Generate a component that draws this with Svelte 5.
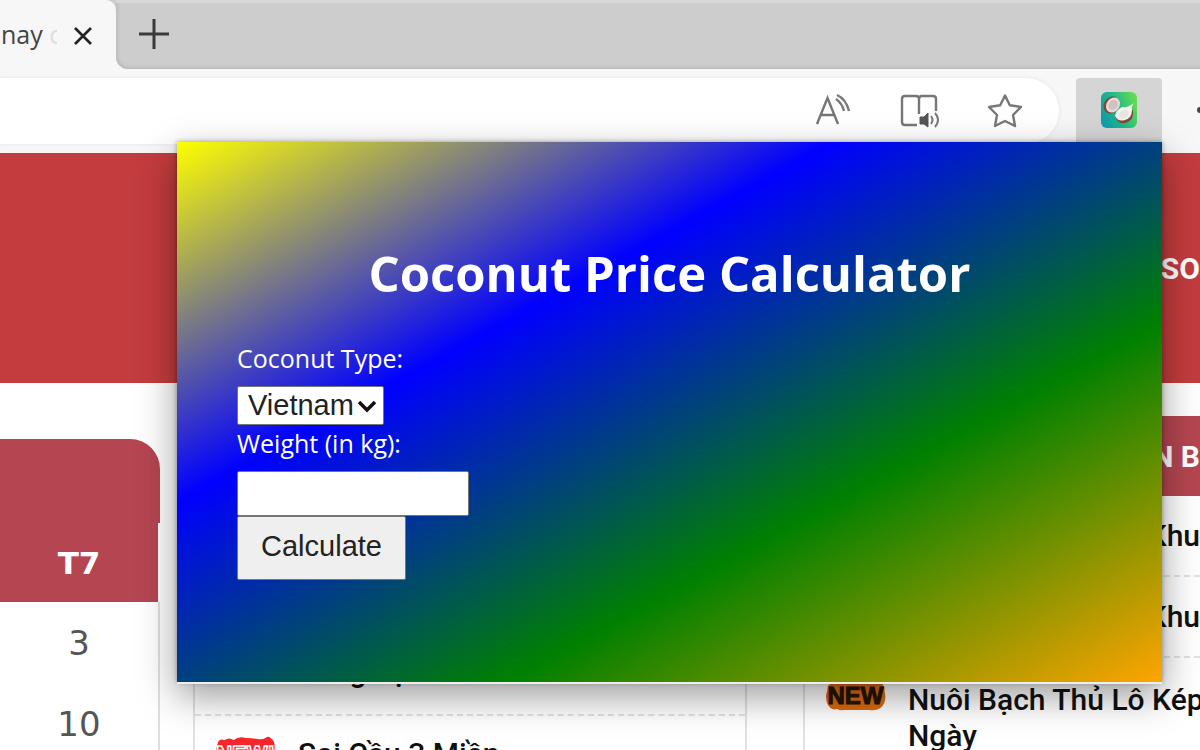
<script>
  let coconutType = $state('Vietnam');
  let weight = $state('');
</script>

{#snippet orangeBadge()}
  <svg class="badge" width="61" height="30" viewBox="0 0 60 30" aria-hidden="true">
    <path
      d="M8 1 H52 Q60 1 59 9 Q62 20 55 26 Q50 29 44 28 L18 28 Q14 29 12 27 Q5 29 2 22 Q-1 15 2 8 Q1 2 8 1Z"
      fill="#dc6910"
    />
    <text x="30" y="22" text-anchor="middle" font-size="24" fill="#271405" stroke="#271405">NEW</text>
  </svg>
{/snippet}

{#snippet redBadge()}
  <svg class="badge" width="61" height="42" viewBox="0 0 60 42" aria-hidden="true">
    <path
      d="M2 8 Q3 2 9 4 Q14 1 18 4 Q24 0 30 2 Q37 2 42 3 Q47 4 50 2 Q53 -1 56 3 Q60 5 59 14 L57 32 Q54 40 48 38 L12 38 Q4 39 2 30 Q-1 18 2 8Z"
      fill="#f8252b"
    />
    <text x="30" y="25" text-anchor="middle" font-size="22" fill="#f8252b" stroke="#fff" stroke-width="1.5">NEW!</text>
  </svg>
{/snippet}

<div class="window">
  <header class="tabs">
    <div class="tab">
      <span class="tab-title">nay <i>c</i></span>
      <button class="bare" aria-label="Close tab">
        <svg width="20" height="20" viewBox="0 0 20 20"><path d="M2 2 18 18M18 2 2 18" stroke="#222" stroke-width="2.6" /></svg>
      </button>
    </div>
    <div class="strip">
      <button class="bare" aria-label="New tab">
        <svg width="32" height="32" viewBox="0 0 32 32"><path d="M1 16H31M16 1V31" stroke="#3a3a3a" stroke-width="3" /></svg>
      </button>
    </div>
  </header>

  <div class="toolbar">
    <div class="address">
      <button class="bare" aria-label="Read aloud">
        <svg width="36" height="36" viewBox="0 0 36 36" fill="none" stroke="#777" stroke-width="2.400">
          <path d="M2 31 12.500 5 23 31M6 22H19" />
          <path d="M21 6Q27 10 29 18M22 2Q31 6 34 18" />
        </svg>
      </button>
      <button class="bare" aria-label="Immersive reader">
        <svg width="40" height="36" viewBox="0 0 40 36" fill="none" stroke="#777" stroke-width="2.400">
          <path d="M18 32H6Q3 32 3 29V6Q3 3 6 3H17Q20 3 20 6V21M20 6Q20 3 23 3H34Q37 3 37 6V18" />
          <path d="M21 24H25L29 20V34L25 31H21Z" fill="#555" stroke="#555" stroke-width="1" />
          <path d="M32 23Q35 27 32 31M36 20Q42 27 36 34" stroke-width="2" />
        </svg>
      </button>
      <button class="bare" aria-label="Add to favorites">
        <svg width="36" height="36" viewBox="0 0 36 36" fill="none" stroke="#777" stroke-width="2.400" stroke-linejoin="round">
          <path d="M18 2.500 22.800 12.300 34 14 26 22 28 33 18 28 8 33 10 22 2 14 13.200 12.300Z" />
        </svg>
      </button>
    </div>

    <div class="extension">
      <button class="bare ext-button" aria-label="Coconut Price Calculator">
        <svg width="36" height="36" viewBox="0 0 36 36">
          <defs>
            <linearGradient id="tile" x1="0" y1=".7" x2="1" y2=".3">
              <stop offset="0" stop-color="#109da9" />
              <stop offset=".5" stop-color="#23b98a" />
              <stop offset="1" stop-color="#62dc51" />
            </linearGradient>
          </defs>
          <rect width="36" height="36" rx="6" fill="url(#tile)" />
          <ellipse cx="10.500" cy="13" rx="7.500" ry="9" transform="rotate(35 10.500 13)" fill="#804936" />
          <ellipse cx="12" cy="13" rx="6.500" ry="8" transform="rotate(35 12 13)" fill="#e6dcda" />
          <ellipse cx="12" cy="13" rx="4.500" ry="5.500" transform="rotate(35 12 13)" fill="#cfc3c2" />
          <path d="M14 25Q18 34 27 30Q33 27 32 18Z" fill="#804936" />
          <path d="M14 24Q15 18 21 15Q27 16 33 11Q30 15 31 18Q31 26 24 28Q17 30 14 24Z" fill="#f3f2ef" />
          <ellipse cx="23" cy="22" rx="5" ry="4" transform="rotate(-35 23 22)" fill="#e6e6e3" />
        </svg>
      </button>

      <section class="popup">
        <h1>Coconut Price Calculator</h1>
        <form onsubmit={(e) => e.preventDefault()}>
          <label for="type">Coconut Type:</label>
          <div class="select-wrap">
            <select id="type" bind:value={coconutType}>
              <option>Vietnam</option>
            </select>
            <svg width="20" height="14" viewBox="0 0 20 14"><path d="M2 3 10 11 18 3" fill="none" stroke="#111" stroke-width="3.500" /></svg>
          </div>
          <label for="weight">Weight (in kg):</label>
          <input id="weight" type="text" bind:value={weight} />
          <button class="calculate">Calculate</button>
        </form>
      </section>
    </div>
    <button class="bare more" aria-label="More">
      <svg width="3" height="6" viewBox="0 0 3 6"><circle cx="3" cy="3" r="3" fill="#444" /></svg>
    </button>
  </div>

  <main>
    <nav><a href="#top">SO</a></nav>
    <div class="columns">
      <table>
        <thead>
          <tr class="month"><td></td></tr>
          <tr><th>T7</th></tr>
        </thead>
        <tbody>
          <tr><td>3</td></tr>
          <tr><td>10</td></tr>
        </tbody>
      </table>

      <ul class="list middle">
        <li class="first"><span class="spacer"></span><a href="#a">Vàng Lộc</a></li>
        <li class="second">{@render redBadge()}<a href="#b">Soi Cầu 3 Miền</a></li>
      </ul>

      <section class="right">
        <h2>N B</h2>
        <ul class="list">
          <li class="tail"><a href="#c">Khu</a></li>
          <li class="tail"><a href="#d">Khu</a></li>
          <li class="wrapped">{@render orangeBadge()}<a href="#e">Nuôi Bạch Thủ Lô Kép<br />Ngày</a></li>
        </ul>
      </section>
    </div>
  </main>
</div>

<style>
  :global(body) { margin: 0; background: #fff; }
  * { box-sizing: border-box; }
  .window {
    height: 100vh;
    display: flex;
    flex-direction: column;
    overflow: hidden;
    font-family: Roboto, "Liberation Sans", sans-serif;
  }
  svg { display: block; flex: none; }
  a { color: inherit; text-decoration: none; }
  .bare { border: 0; padding: 0; background: none; display: flex; align-items: center; justify-content: center; }

  .tabs { display: flex; height: 69px; flex: none; background: linear-gradient(#cdcdcd 50%, #f7f7f7 50%); }
  .tab {
    display: flex;
    align-items: center;
    justify-content: space-between;
    width: 116px;
    padding: 2px 23px 0 1px;
    background: #f7f7f7;
    border-top-right-radius: 10px;
  }
  .tab-title { font: 25px/32px "Open Sans", sans-serif; color: #444; white-space: nowrap; width: 56px; padding-bottom: 4px; overflow: hidden; }
  .tab-title i { font-style: normal; color: #ddd; }
  .strip {
    flex: 1;
    display: flex;
    align-items: center;
    padding: 0 0 4px 22px;
    background: #cdcdcd;
    border-top: 3px solid #d8d8d8;
    border-bottom-left-radius: 12px;
    box-shadow: inset 2px -2px 3px #bdbdbd;
  }

  .toolbar {
    position: relative;
    z-index: 1;
    flex: none;
    display: flex;
    height: 84px;
    padding-top: 9px;
    background: #f7f7f7;
  }
  .address {
    flex: 1;
    display: flex;
    align-items: center;
    justify-content: flex-end;
    gap: 48px;
    height: 66px;
    padding-right: 36px;
    background: #fff;
    border-radius: 0 33px 33px 0;
    box-shadow: 0 0 4px #e4e4e4;
  }
  .extension { position: relative; margin-left: 17px; width: 86px; height: 64px; }
  .ext-button { width: 100%; height: 100%; background: #d5d5d5; border-radius: 4px 4px 0 0; }
  .more { width: 38px; height: 64px; justify-content: flex-end; }

  .popup {
    position: absolute;
    top: 100%;
    right: 0;
    width: 985px;
    padding: 97px 60px 102px;
    color: #fff;
    font-family: "Open Sans", "Noto Sans", sans-serif;
    background: linear-gradient(to bottom right, yellow, blue, green, orange);
    box-shadow: 0 2px 0 #eee, 0 0 5px rgba(0, 0, 0, .35), 0 14px 36px rgba(0, 0, 0, .4);
  }
  h1 { margin: 0 0 33px; font-size: 49px; line-height: 68px; text-align: center; white-space: nowrap; }
  form { display: flex; flex-direction: column; align-items: flex-start; }
  label { font-size: 25px; line-height: 36px; margin-bottom: 10px; }
  .select-wrap { display: flex; align-items: center; height: 39px; }
  .select-wrap svg { margin-left: -27px; pointer-events: none; }
  select, input, .calculate {
    font: 29px "Liberation Sans", Arial, sans-serif;
    color: #222;
    border: 1px solid #767676;
    border-radius: 2px;
    margin: 0;
  }
  select { appearance: none; width: 147px; height: 39px; padding: 0 10px 2px; background: #fff; }
  input { width: 232px; height: 45px; background: #fff; }
  .calculate { width: 169px; height: 64px; padding: 0 0 4px; background: #efefef; }

  main { flex: 1; min-height: 0; }
  nav {
    display: flex;
    align-items: center;
    justify-content: flex-end;
    height: 230px;
    background: #c33c3e;
    color: #fff;
    font-size: 30px;
    font-weight: 700;
  }
  .columns { display: grid; grid-template-columns: 160px 554px minmax(0, 1fr); }
  .middle { margin-left: 33px; margin-right: -33px; }
  .right { margin-left: 89px; margin-top: 33px; border-left: 2px solid #dfe2e6; }

  table {
    align-self: start;
    width: 160px;
    margin-top: 56px;
    border-collapse: separate;
    border-spacing: 0;
    table-layout: fixed;
    font-family: "DejaVu Sans", Verdana, sans-serif;
    text-align: center;
  }
  td, th { padding: 0; }
  .month td { height: 84px; background: #b54651; border: 0; border-top-right-radius: 30px; }
  th { height: 79px; background: #b54651; background-clip: padding-box; border-right: 2px solid #fff; color: #fff; font-size: 31px; }
  td { height: 81px; border-right: 2px solid #e3dedb; color: #555; font-size: 34px; }

  .list { list-style: none; padding: 0; margin-top: 0; margin-bottom: 0; font-size: 30px; font-weight: 500; line-height: 36px; color: #111; }
  .middle { margin-top: 33px; border: 2px solid #dfe2e6; border-width: 0 2px; }
  li { display: flex; align-items: center; gap: 22px; height: 81px; padding: 0 20px; border-bottom: 2px dashed #dfe2e6; white-space: nowrap; }
  .middle .first { height: 300px; align-items: flex-end; padding-bottom: 24px; }
  .middle .second { height: 120px; align-items: flex-start; padding-top: 20px; }
  .spacer { width: 61px; flex: none; }
  .badge { font-family: "Liberation Sans", Arial, sans-serif; font-weight: 700; }
  h2 {
    display: flex;
    align-items: center;
    justify-content: flex-end;
    height: 80px;
    margin: 0;
    background: #b54651;
    color: #fff;
    font-size: 30px;
    overflow: hidden;
  }
  .tail { justify-content: flex-end; padding: 0; }
  .wrapped { height: 120px; align-items: flex-start; padding-top: 24px; }
</style>
